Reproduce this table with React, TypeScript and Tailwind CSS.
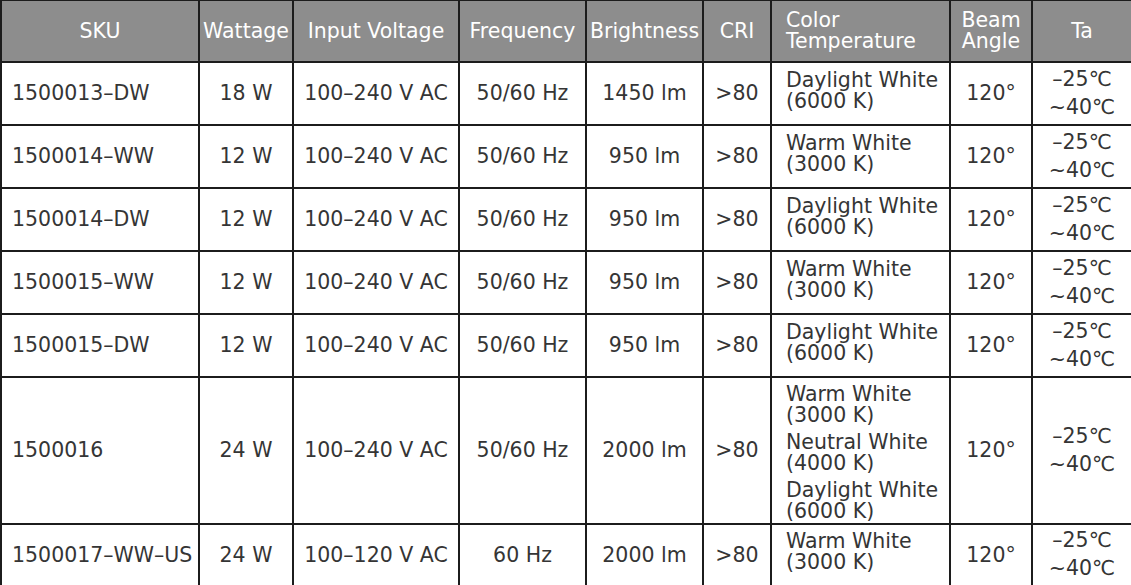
import React from "react";

type Row = {
  sku: string;
  w: string;
  v: string;
  f: string;
  b: string;
  ct: [string, string][];
  h: string;
  m: string;
};

const rows: Row[] = [
  { sku: "1500013–DW", w: "18 W", v: "100–240 V AC", f: "50/60 Hz", b: "1450 lm", ct: [["Daylight White", "(6000 K)"]], h: "h-[63px]", m: "-mt-[6px]" },
  { sku: "1500014–WW", w: "12 W", v: "100–240 V AC", f: "50/60 Hz", b: "950 lm", ct: [["Warm White", "(3000 K)"]], h: "h-[63px]", m: "-mt-[6px]" },
  { sku: "1500014–DW", w: "12 W", v: "100–240 V AC", f: "50/60 Hz", b: "950 lm", ct: [["Daylight White", "(6000 K)"]], h: "h-[63px]", m: "-mt-[6px]" },
  { sku: "1500015–WW", w: "12 W", v: "100–240 V AC", f: "50/60 Hz", b: "950 lm", ct: [["Warm White", "(3000 K)"]], h: "h-[63px]", m: "-mt-[6px]" },
  { sku: "1500015–DW", w: "12 W", v: "100–240 V AC", f: "50/60 Hz", b: "950 lm", ct: [["Daylight White", "(6000 K)"]], h: "h-[63px]", m: "-mt-[6px]" },
  {
    sku: "1500016",
    w: "24 W",
    v: "100–240 V AC",
    f: "50/60 Hz",
    b: "2000 lm",
    ct: [
      ["Warm White", "(3000 K)"],
      ["Neutral White", "(4000 K)"],
      ["Daylight White", "(6000 K)"],
    ],
    h: "h-[147px]",
    m: "mt-[4px]",
  },
  { sku: "1500017–WW–US", w: "24 W", v: "100–120 V AC", f: "60 Hz", b: "2000 lm", ct: [["Warm White", "(3000 K)"]], h: "h-[62px]", m: "-mt-[6px]" },
];

const td = "border-2 border-[#1c1c1c] text-center align-middle p-0 whitespace-nowrap";
const th = "border-2 border-[#1c1c1c] text-center align-middle p-0 font-normal whitespace-nowrap";

export default function App() {
  return (
    <div
      className="w-[1131px] h-[585px] bg-white overflow-hidden text-[20.5px] text-[#353535]"
      style={{ fontFamily: '"DejaVu Sans", Verdana, sans-serif' }}
    >
      <table className="border-collapse table-fixed w-[1131px] -mt-px">
        <colgroup>
          <col className="w-[198px]" />
          <col className="w-[94px]" />
          <col className="w-[166px]" />
          <col className="w-[127px]" />
          <col className="w-[117px]" />
          <col className="w-[68px]" />
          <col className="w-[179px]" />
          <col className="w-[82px]" />
          <col className="w-[100px]" />
        </colgroup>
        <thead>
          <tr className="h-[62px] bg-[#8d8d8d] text-white">
            <th className={th}>SKU</th>
            <th className={th}>Wattage</th>
            <th className={th}>Input Voltage</th>
            <th className={th}>Frequency</th>
            <th className={th}>Brightness</th>
            <th className={th}>CRI</th>
            <th className={th + " !text-left pl-[14px] leading-[21px]"}>
              <div>Color</div>
              <div>Temperature</div>
            </th>
            <th className={th + " leading-[21px]"}>
              <div>Beam</div>
              <div>Angle</div>
            </th>
            <th className={th}>Ta</th>
          </tr>
        </thead>
        <tbody>
          {rows.map((r, i) => (
            <tr key={i} className={r.h}>
              <td className={td + " !text-left pl-[10px]"}>{r.sku}</td>
              <td className={td}>{r.w}</td>
              <td className={td}>{r.v}</td>
              <td className={td}>{r.f}</td>
              <td className={td}>{r.b}</td>
              <td className={td}>&gt;80</td>
              <td className={td + " !text-left pl-[14px] leading-[21px]"}>
                <div className={"flex flex-col gap-[6px] " + r.m}>
                  {r.ct.map(([a, b], j) => (
                    <div key={j}>
                      <div>{a}</div>
                      <div>{b}</div>
                    </div>
                  ))}
                </div>
              </td>
              <td className={td}>120°</td>
              <td className={td + " leading-[28px]"}>
                <div className="-mt-[2px]">–25℃</div>
                <div>~40℃</div>
              </td>
            </tr>
          ))}
        </tbody>
      </table>
    </div>
  );
}
